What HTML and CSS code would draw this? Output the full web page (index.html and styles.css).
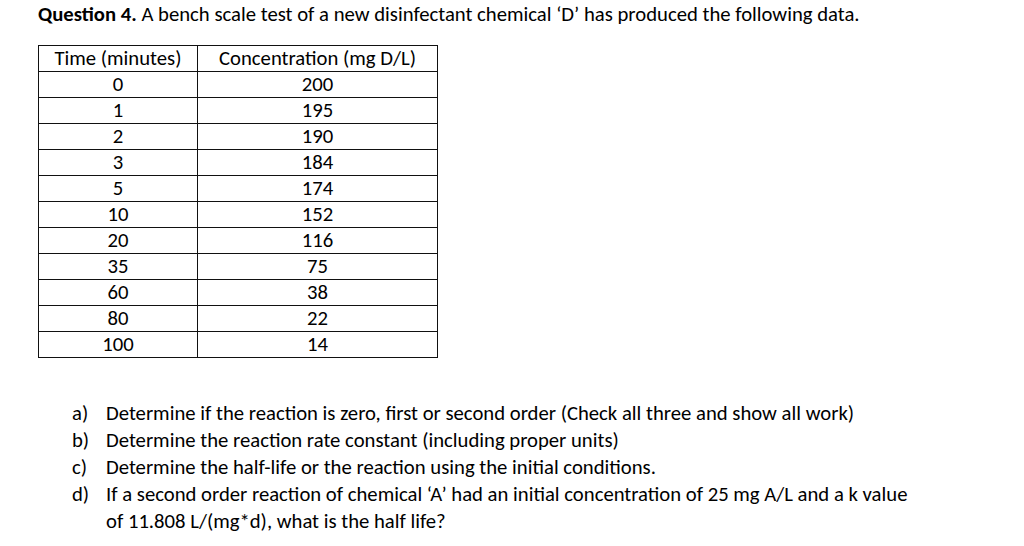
FILE: index.html
```html
<!DOCTYPE html>
<html>
<head>
<meta charset="utf-8">
<link rel="stylesheet" href="styles.css">
</head>
<body>
<div class="page">
  <p class="title"><b>Question 4.</b> A bench scale test of a new disinfectant chemical ‘D’ has produced the following data.</p>
  <table class="data">
    <tr><th>Time (minutes)</th><th>Concentration (mg D/L)</th></tr>
    <tr><td>0</td><td>200</td></tr>
    <tr><td>1</td><td>195</td></tr>
    <tr><td>2</td><td>190</td></tr>
    <tr><td>3</td><td>184</td></tr>
    <tr><td>5</td><td>174</td></tr>
    <tr><td>10</td><td>152</td></tr>
    <tr><td>20</td><td>116</td></tr>
    <tr><td>35</td><td>75</td></tr>
    <tr><td>60</td><td>38</td></tr>
    <tr><td>80</td><td>22</td></tr>
    <tr><td>100</td><td>14</td></tr>
  </table>
  <ol class="tasks">
    <li><span class="lbl">a)</span><span class="txt">Determine if the reaction is zero, first or second order (Check all three and show all work)</span></li>
    <li><span class="lbl">b)</span><span class="txt">Determine the reaction rate constant (including proper units)</span></li>
    <li><span class="lbl">c)</span><span class="txt">Determine the half-life or the reaction using the initial conditions.</span></li>
    <li><span class="lbl">d)</span><span class="txt">If a second order reaction of chemical ‘A’ had an initial concentration of 25 mg A/L and a k value of 11.808 L/(mg*d), what is the half life?</span></li>
  </ol>
</div>
</body>
</html>
```
FILE: styles.css
```css
html, body {
  margin: 0;
  padding: 0;
  background: #fff;
}
body {
  font-family: "Carlito", "Open Sans", "Liberation Sans", sans-serif;
  color: #000;
  font-size: 20.7px;
}
.page {
  padding: 2px 0 0 38px;
}
.title {
  margin: 0;
  line-height: 24px;
}
.title b {
  font-weight: 700;
}
.data {
  margin-top: 19px;
  border-collapse: collapse;
}
.data th, .data td {
  border: 1px solid #111;
  height: 25px;
  padding: 0;
  text-align: center;
  font-weight: 400;
  line-height: 25px;
}
.data th:first-child, .data td:first-child {
  width: 158px;
}
.data th:last-child, .data td:last-child {
  width: 239px;
}
.tasks {
  list-style: none;
  margin: 42px 0 0 34px;
  padding: 0;
}
.tasks li {
  display: flex;
  line-height: 27px;
}
.lbl {
  width: 34px;
  flex: none;
}
.txt {
  width: 815px;
  flex: none;
}
```
